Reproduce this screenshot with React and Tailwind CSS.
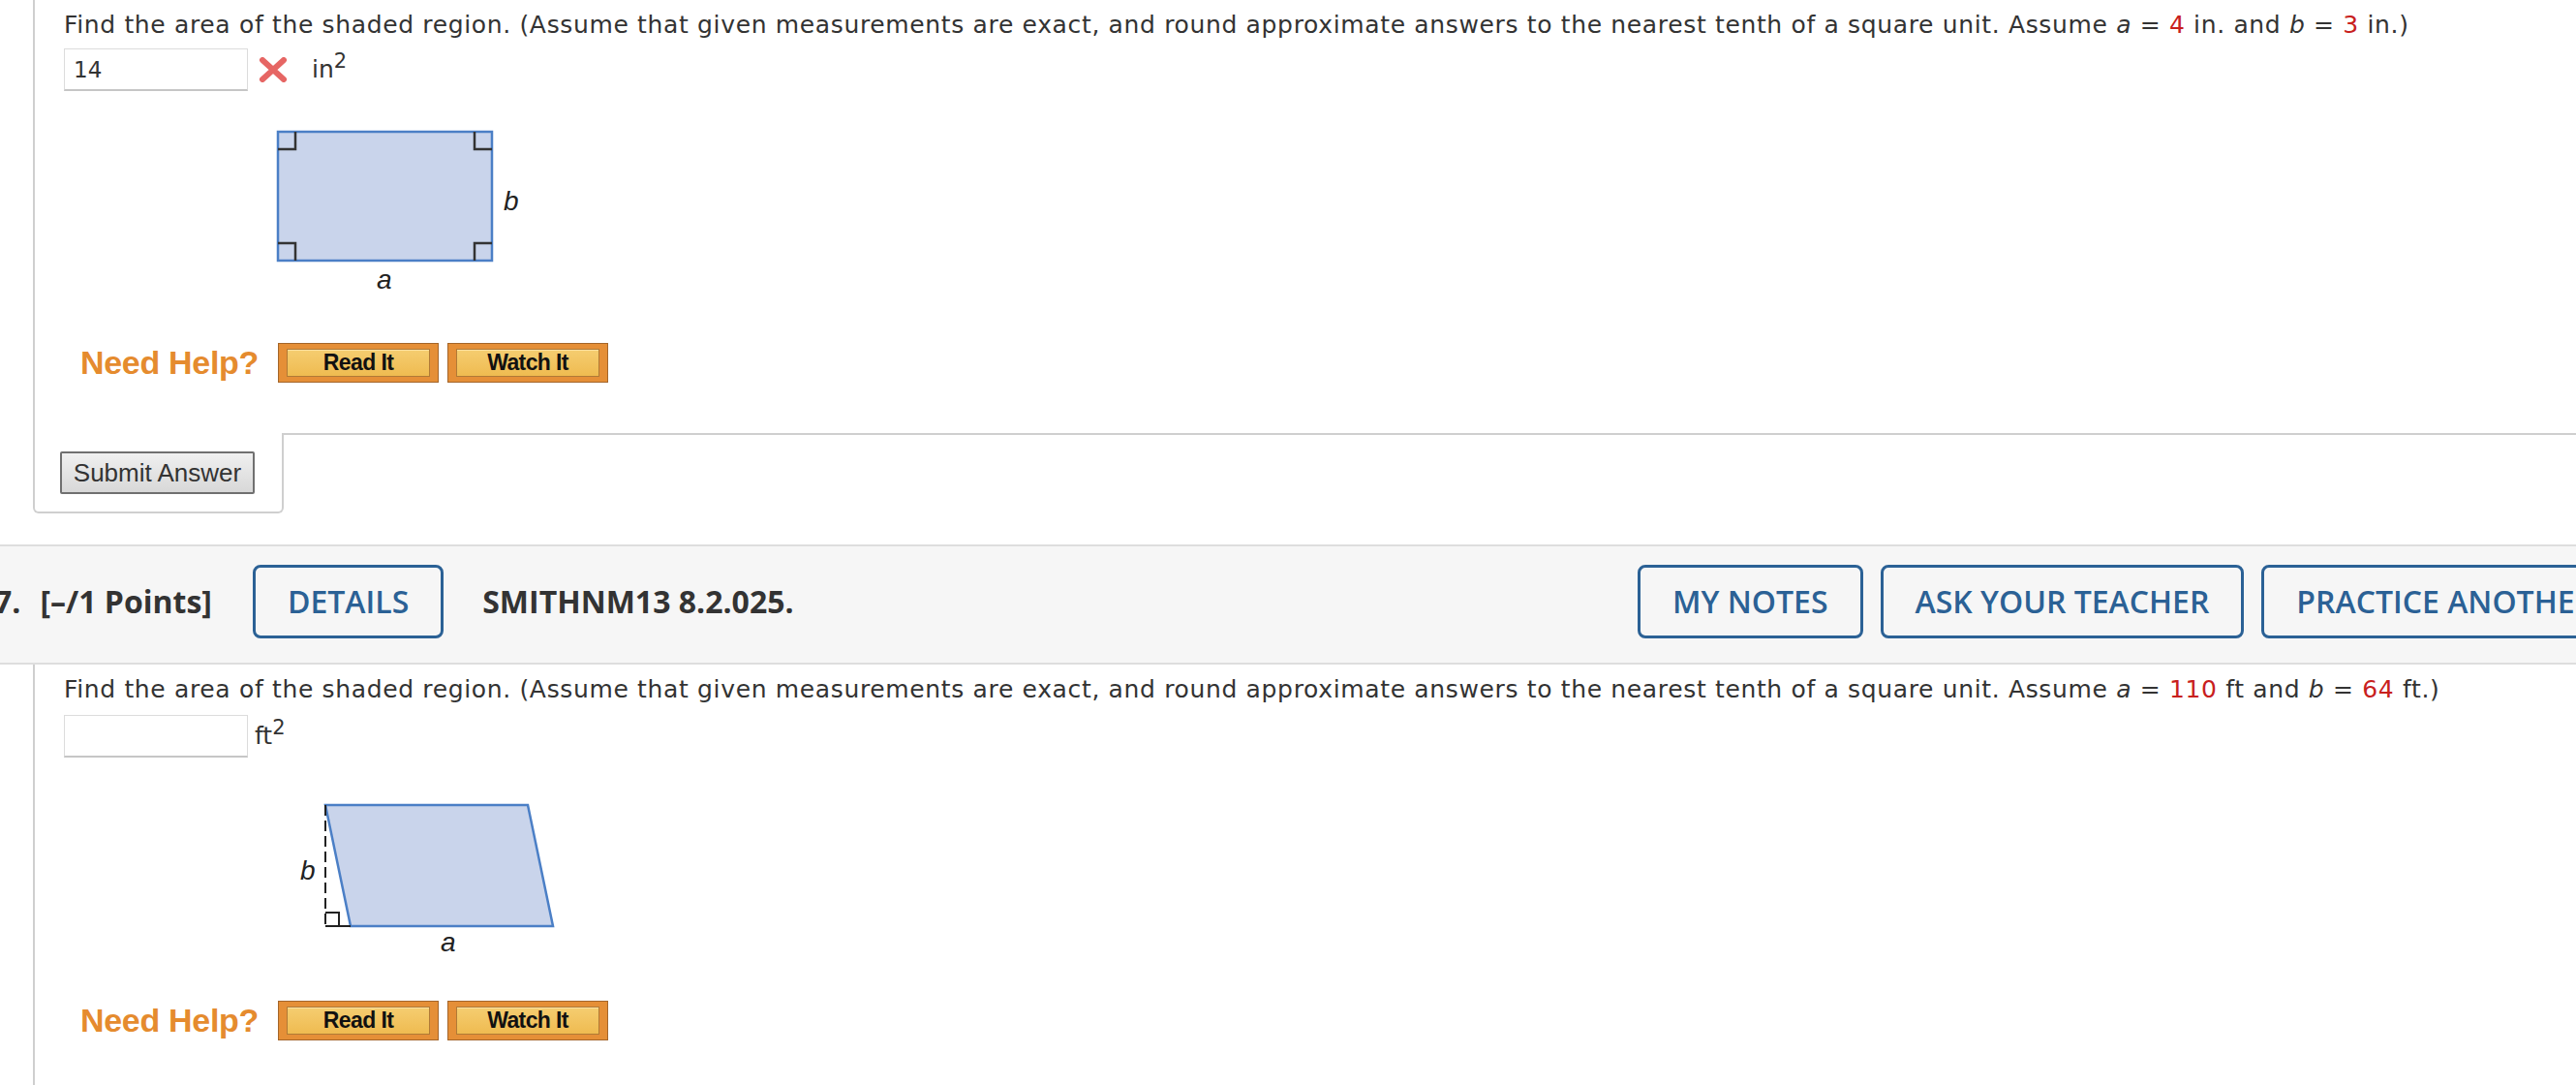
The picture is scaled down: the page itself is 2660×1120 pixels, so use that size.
import React from "react";

function HelpButton({ label, className = "" }) {
  return (
    <div className={`w-[166px] h-[41px] border border-[#a4652a] bg-[#e58f37] px-[8px] py-[5px] ${className}`}>
      <div className="h-full border border-[#b07a36] bg-linear-to-b from-[#f5cd70] to-[#efbb50] shadow-[inset_0_1px_0_#fbe0a0] flex items-center justify-center font-['Liberation_Sans',Arial,sans-serif] font-bold text-[23px] text-[#111] tracking-[-0.6px]">
        {label}
      </div>
    </div>
  );
}

function NeedHelp({ className = "" }) {
  return (
    <div className={`flex items-center ml-[17px] ${className}`}>
      <span className="font-['Liberation_Sans',Arial,sans-serif] font-bold text-[34px] text-[#e58b2e] tracking-[-0.3px]">
        Need Help?
      </span>
      <HelpButton label="Read It" className="ml-[20px]" />
      <HelpButton label="Watch It" className="ml-[9px]" />
    </div>
  );
}

function HeaderButton({ label }) {
  return (
    <div className="h-[76px] shrink-0 px-[33px] border-[3px] border-[#2b6195] rounded-[8px] flex items-center text-[32px] font-semibold text-[#2b6195] whitespace-nowrap">
      {label}
    </div>
  );
}

const Red = ({ children }) => <span className="text-[#c8201d]">{children}</span>;

export default function App() {
  return (
    <div className="w-[2660px] h-[1120px] overflow-hidden bg-white text-[#333] font-['DejaVu_Sans',Verdana,sans-serif]">
      {/* question 6 */}
      <div className="ml-[34px] h-[447px] border-l-2 border-[#cfcfcf] pl-[30px] pt-[10px]">
        <p className="text-[25px] leading-[32px] tracking-[0.65px] whitespace-nowrap">
          Find the area of the shaded region. (Assume that given measurements are exact, and round approximate
          answers to the nearest tenth of a square unit. Assume <i>a</i> = <Red>4</Red> in. and <i>b</i> ={" "}
          <Red>3</Red> in.)
        </p>
        <div className="mt-[8px] flex items-center">
          <input
            readOnly
            value="14"
            className="w-[190px] h-[44px] border border-[#dcdcdc] border-b-2 border-b-[#c6c6c6] pl-[9px] text-[23px] text-[#333] outline-none"
          />
          <svg width="30" height="26" viewBox="0 0 30 26" className="ml-[11px]">
            <path d="M4 3 L26 23 M26 3 L4 23" stroke="#e66664" strokeWidth="6" strokeLinecap="round" />
          </svg>
          <span className="ml-[25px] text-[25px]">
            in<sup className="text-[21px]">2</sup>
          </span>
        </div>
        <svg width="260" height="177" className="ml-[214px] mt-[34px] block">
          <rect x="7" y="8" width="221" height="133" fill="#c9d4eb" stroke="#4b7fc6" strokeWidth="2.5" />
          <g fill="none" stroke="#333" strokeWidth="2.5">
            <path d="M7 26 H25 V8" />
            <path d="M228 26 H210 V8" />
            <path d="M7 123 H25 V141" />
            <path d="M228 123 H210 V141" />
          </g>
          <text x="240" y="89" fontStyle="italic" fontSize="28" fontFamily="Liberation Sans, Arial, sans-serif" fill="#222">
            b
          </text>
          <text x="109" y="170" fontStyle="italic" fontSize="28" fontFamily="Liberation Sans, Arial, sans-serif" fill="#222">
            a
          </text>
        </svg>
        <NeedHelp className="mt-[44px]" />
      </div>

      {/* submit tab */}
      <div className="flex">
        <div className="ml-[34px] w-[259px] h-[83px] shrink-0 border-2 border-t-0 border-[#cfcfcf] rounded-b-[6px] pl-[26px] pt-[19px]">
          <button className="w-[201px] h-[44px] border-2 border-[#707070] rounded-[2px] bg-linear-to-b from-[#f0f0f0] to-[#d8d8d8] font-['Liberation_Sans',Arial,sans-serif] text-[26px] text-[#333]">
            Submit Answer
          </button>
        </div>
        <div className="flex-1 border-t-2 border-[#cfcfcf]" />
      </div>

      {/* question 7 header */}
      <div className="mt-[32px] h-[124px] border-y-2 border-[#dedede] bg-[#f6f6f6] pb-[6px] flex items-center font-['Open_Sans',sans-serif]">
        <div className="w-[1691px] shrink-0 flex items-center">
          <span className="-ml-[6px] text-[32px] font-bold text-[#333]">7.</span>
          <span className="ml-[20px] text-[32px] font-bold text-[#333] whitespace-nowrap">[–/1 Points]</span>
          <div className="ml-[42px]">
            <HeaderButton label="DETAILS" />
          </div>
          <span className="ml-[40px] text-[32px] font-bold text-[#333] whitespace-nowrap">SMITHNM13 8.2.025.</span>
        </div>
        <div className="flex gap-[18px] shrink-0">
          <HeaderButton label="MY NOTES" />
          <HeaderButton label="ASK YOUR TEACHER" />
          <HeaderButton label="PRACTICE ANOTHER" />
        </div>
      </div>

      {/* question 7 body */}
      <div className="ml-[34px] h-[434px] border-l-2 border-[#cfcfcf] pl-[30px] pt-[10px]">
        <p className="text-[25px] leading-[32px] tracking-[0.65px] whitespace-nowrap">
          Find the area of the shaded region. (Assume that given measurements are exact, and round approximate
          answers to the nearest tenth of a square unit. Assume <i>a</i> = <Red>110</Red> ft and <i>b</i> ={" "}
          <Red>64</Red> ft.)
        </p>
        <div className="mt-[10px] flex items-center">
          <input
            readOnly
            value=""
            className="w-[190px] h-[44px] border border-[#dcdcdc] border-b-2 border-b-[#c6c6c6] pl-[9px] text-[23px] outline-none"
          />
          <span className="ml-[7px] text-[25px]">
            ft<sup className="text-[21px]">2</sup>
          </span>
        </div>
        <svg width="300" height="170" className="ml-[234px] mt-[38px] block">
          <polygon points="36,11 245,11 271,136 62,136" fill="#c9d4eb" stroke="#4b7fc6" strokeWidth="2.5" />
          <line x1="36" y1="11" x2="36" y2="136" stroke="#222" strokeWidth="2" strokeDasharray="11 5" />
          <path d="M36 122 H50 V136" fill="none" stroke="#222" strokeWidth="2" />
          <line x1="36" y1="136" x2="62" y2="136" stroke="#222" strokeWidth="2" />
          <text x="10" y="88" fontStyle="italic" fontSize="28" fontFamily="Liberation Sans, Arial, sans-serif" fill="#222">
            b
          </text>
          <text x="155" y="162" fontStyle="italic" fontSize="28" fontFamily="Liberation Sans, Arial, sans-serif" fill="#222">
            a
          </text>
        </svg>
        <NeedHelp className="mt-[38px]" />
      </div>
    </div>
  );
}
